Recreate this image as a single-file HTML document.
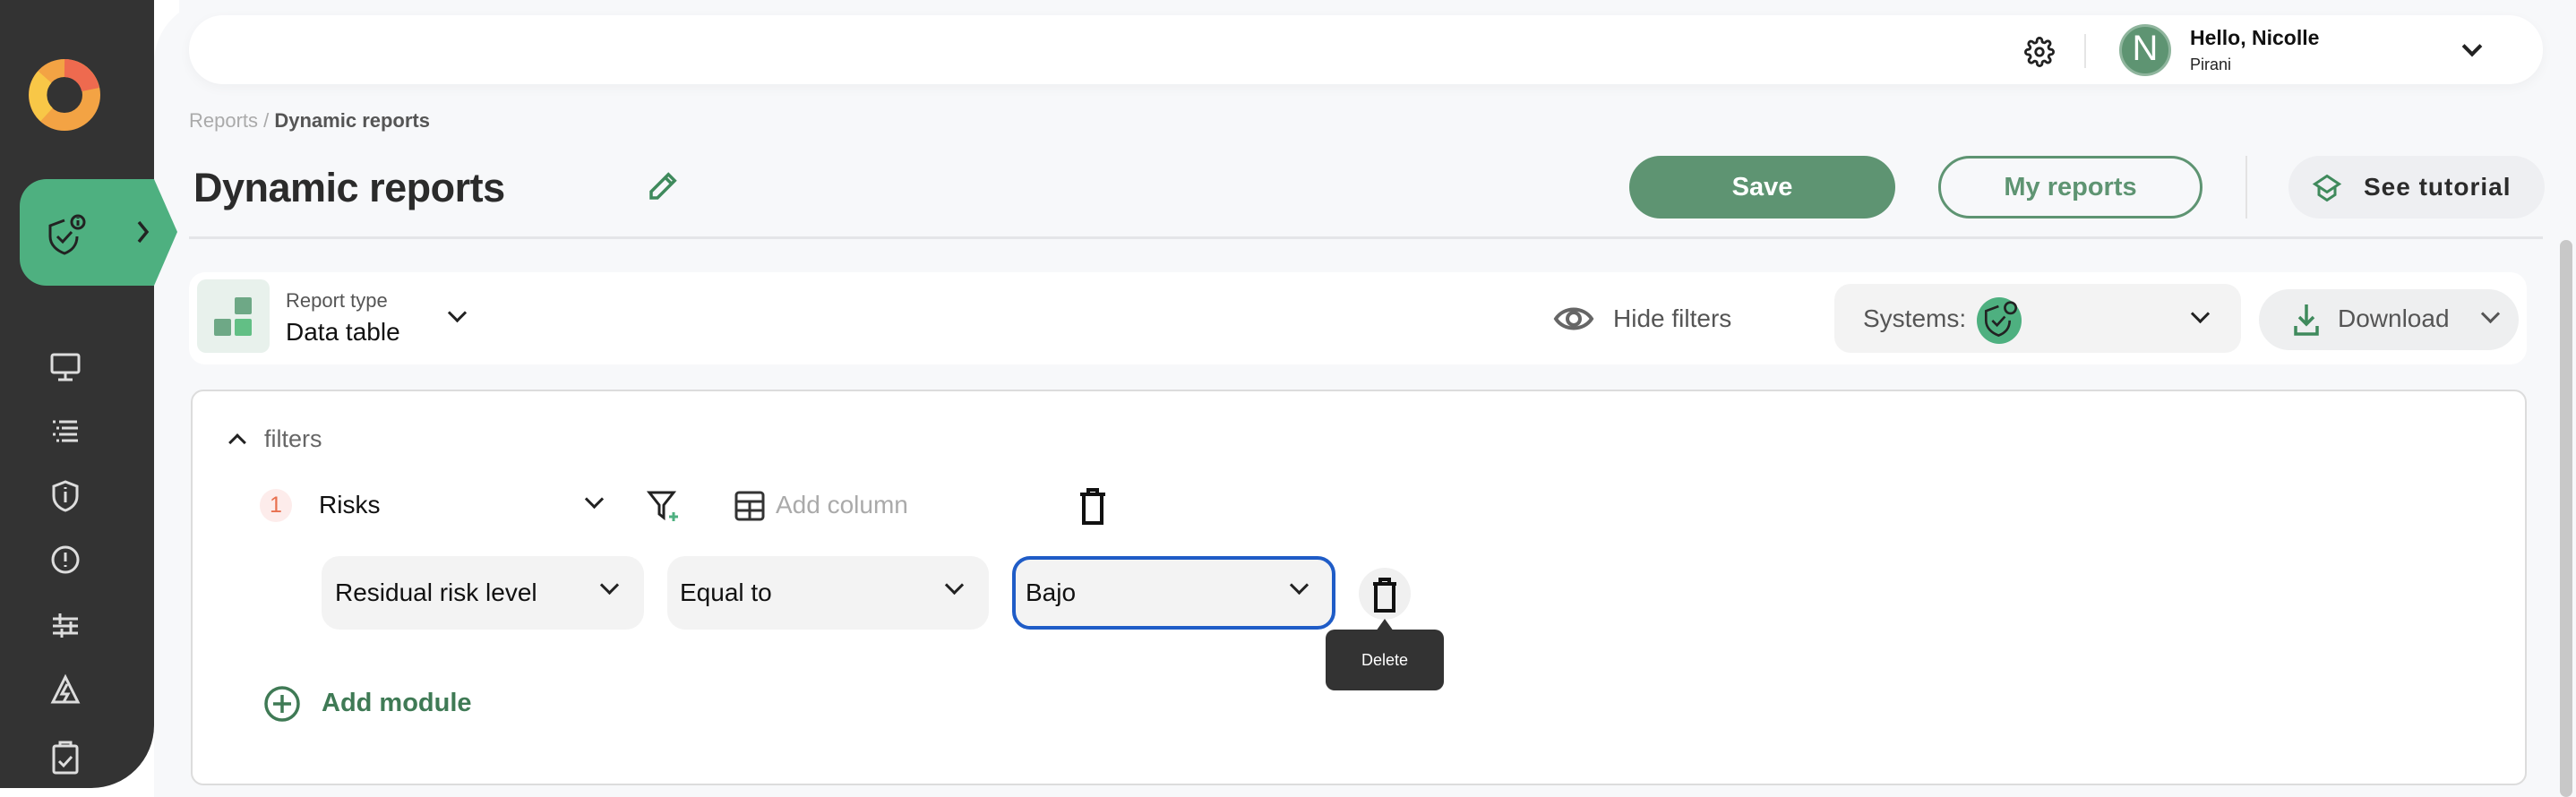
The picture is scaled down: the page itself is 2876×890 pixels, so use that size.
<!DOCTYPE html>
<html><head><meta charset="utf-8"><style>
*{box-sizing:border-box;margin:0;padding:0}
body{width:2876px;height:890px;overflow:hidden;background:#f7f8fa;font-family:"Liberation Sans",sans-serif;position:relative;color:#222}
.a{position:absolute}
.side{left:0;top:0;width:172px;height:880px;background:#333;border-bottom-right-radius:70px}
.mainbg{left:172px;top:0;width:2704px;height:890px;background:#f7f8fa;border-top-left-radius:70px}
.card{background:#fff}
.t{white-space:nowrap}
.chev{width:18px;height:18px;border-right:4px solid #222;border-bottom:4px solid #222;transform:rotate(45deg)}
</style></head><body>
<div class="a" style="left:0;top:0;width:200px;height:890px;background:#fff"></div>
<div class="a side"></div>
<div class="a mainbg"></div>
<!-- logo -->
<svg class="a" style="left:30px;top:64px" width="84" height="84" viewBox="0 0 84 84"><circle cx="42" cy="42" r="30" fill="none" stroke="#f3a344" stroke-width="20"/><path d="M42 12 A30 30 0 0 1 71 36" fill="none" stroke="#ee6a4f" stroke-width="20"/><path d="M22 64 A30 30 0 0 1 20 22" fill="none" stroke="#f8c747" stroke-width="20"/><circle cx="42" cy="42" r="19" fill="#333"/></svg>
<!-- active item -->
<div class="a" style="left:22px;top:200px;width:150px;height:119px;background:#4eb080;border-radius:30px 0 0 30px"></div>
<svg class="a" style="left:170px;top:200px" width="30" height="119"><path d="M0 0 L2 0 L28 59 L2 119 L0 119Z" fill="#4eb080"/></svg>
<svg class="a" style="left:50px;top:238px" width="50" height="50" viewBox="0 0 50 50" fill="none" stroke="#222" stroke-width="3"><path d="M22 8 L6 14 V26 C6 36 14 42 22 45 C30 42 36 36 36 26"/><path d="M14 26 L20 32 L30 21"/><circle cx="37" cy="10" r="7"/><path d="M37 8v6M37 5v1"/></svg>
<svg class="a" style="left:150px;top:245px" width="20" height="28"><path d="M5 3 L14 14 L5 25" fill="none" stroke="#222" stroke-width="3.5"/></svg>
<!-- sidebar icons -->
<svg class="a" style="left:55px;top:392px" width="36" height="480" fill="none" stroke="#ddd" stroke-width="3">
<rect x="3" y="4" width="30" height="20" rx="2"/><path d="M18 24v7M10 32h16"/>
<path d="M4 79h3M11 79h20M8 86h3M14 86h18M4 93h3M11 93h20M8 100h3M14 100h18"/>
<path d="M18 146 L5 151 V162 C5 171 12 176 18 178 C24 176 31 171 31 162 V151Z"/><path d="M18 157v12M18 152v2"/>
<circle cx="18" cy="233" r="14"/><path d="M18 225v10M18 239v2"/>
<path d="M4 299h28M4 307h28M4 315h28"/><path d="M12 293v12M24 302v12M14 310v10"/>
<path d="M18 364 L4 392 H32Z"/><path d="M20 372 L14 383 H21 L16 392"/>
<rect x="5" y="441" width="26" height="30" rx="2"/><path d="M12 441v-4h12v4M11 458l5 5 9-10"/>
</svg>
<!-- header card -->
<div class="a card" style="left:211px;top:17px;width:2628px;height:77px;border-radius:38px;box-shadow:0 4px 14px rgba(0,0,0,.04)"></div>
<svg class="a" style="left:2260px;top:41px" width="34" height="34" viewBox="0 0 24 24" fill="none" stroke="#222" stroke-width="2"><circle cx="12" cy="12" r="3"/><path d="M19.4 15a1.6 1.6 0 0 0 .3 1.8l.1.1a2 2 0 1 1-2.8 2.8l-.1-.1a1.6 1.6 0 0 0-1.8-.3 1.6 1.6 0 0 0-1 1.5V21a2 2 0 1 1-4 0v-.1a1.6 1.6 0 0 0-1-1.5 1.6 1.6 0 0 0-1.8.3l-.1.1a2 2 0 1 1-2.8-2.8l.1-.1a1.6 1.6 0 0 0 .3-1.8 1.6 1.6 0 0 0-1.5-1H3a2 2 0 1 1 0-4h.1a1.6 1.6 0 0 0 1.5-1 1.6 1.6 0 0 0-.3-1.8l-.1-.1a2 2 0 1 1 2.8-2.8l.1.1a1.6 1.6 0 0 0 1.8.3H9a1.6 1.6 0 0 0 1-1.5V3a2 2 0 1 1 4 0v.1a1.6 1.6 0 0 0 1 1.5 1.6 1.6 0 0 0 1.8-.3l.1-.1a2 2 0 1 1 2.8 2.8l-.1.1a1.6 1.6 0 0 0-.3 1.8V9a1.6 1.6 0 0 0 1.5 1H21a2 2 0 1 1 0 4h-.1a1.6 1.6 0 0 0-1.5 1z"/></svg>
<div class="a" style="left:2327px;top:38px;width:2px;height:38px;background:#e5e5e5"></div>
<div class="a" style="left:2366px;top:27px;width:58px;height:58px;border-radius:50%;background:#5e9472;border:3px solid #8fb59d"></div>
<div class="a t" style="left:2366px;top:32px;width:58px;text-align:center;font-size:40px;color:#fff">N</div>
<div class="a t" style="left:2445px;top:29px;font-size:23px;font-weight:bold;color:#111">Hello, Nicolle</div>
<div class="a t" style="left:2445px;top:62px;font-size:18px;color:#222">Pirani</div>
<div class="a chev" style="left:2752px;top:44px;width:16px;height:16px"></div>
<!-- breadcrumb/title -->
<div class="a t" style="left:211px;top:122px;font-size:22px;color:#aaa">Reports / <span style="color:#555;font-weight:bold">Dynamic reports</span></div>
<div class="a t" style="left:216px;top:184px;font-size:45px;font-weight:bold;color:#2b2b2b;letter-spacing:-0.5px">Dynamic reports</div>
<svg class="a" style="left:720px;top:186px" width="42" height="42" viewBox="0 0 24 24" fill="none" stroke="#3f8a5c" stroke-width="2"><path d="M4 20 L4 16 L15 5 L19 9 L8 20Z M13 7 L17 11"/></svg>
<div class="a t" style="left:1819px;top:174px;width:297px;height:70px;border-radius:35px;background:#5e9472;color:#fff;font-size:29px;font-weight:bold;text-align:center;line-height:70px">Save</div>
<div class="a t" style="left:2164px;top:174px;width:295px;height:70px;border-radius:35px;border:3px solid #5e9472;color:#5e9472;font-size:29px;font-weight:bold;text-align:center;line-height:64px">My reports</div>
<div class="a" style="left:2507px;top:174px;width:2px;height:70px;background:#e3e3e3"></div>
<div class="a t" style="left:2555px;top:174px;width:286px;height:70px;border-radius:35px;background:#eeeff2;color:#2b2b2b;font-size:28px;font-weight:bold;line-height:70px;padding-left:84px;letter-spacing:1px">See tutorial</div>
<svg class="a" style="left:2580px;top:192px" width="36" height="36" viewBox="0 0 24 24" fill="none" stroke="#3f8a5c" stroke-width="2"><path d="M12 3 L21 9 L12 15 L3 9Z M6 11v6l6 4 6-4v-6"/></svg>
<div class="a" style="left:211px;top:264px;width:2628px;height:3px;background:#e4e5e8"></div>
<div class="a" style="left:2858px;top:268px;width:14px;height:622px;background:#c8c8c8;border-radius:7px"></div>
<!-- report type card -->
<div class="a card" style="left:211px;top:304px;width:2610px;height:103px;border-radius:18px"></div>
<div class="a" style="left:220px;top:312px;width:81px;height:82px;border-radius:10px;background:#e8f1ec"></div>
<div class="a" style="left:262px;top:332px;width:19px;height:19px;background:#6ea886;border-radius:2px"></div>
<div class="a" style="left:239px;top:356px;width:19px;height:19px;background:#6ea886;border-radius:2px"></div>
<div class="a" style="left:262px;top:356px;width:19px;height:19px;background:#62bf85;border-radius:2px"></div>
<div class="a t" style="left:319px;top:323px;font-size:22px;color:#555">Report type</div>
<div class="a t" style="left:319px;top:355px;font-size:28px;color:#111">Data table</div>
<div class="a chev" style="left:503px;top:342px;width:15px;height:15px;border-width:3.5px"></div>
<svg class="a" style="left:1734px;top:339px" width="46" height="34" viewBox="0 0 46 34" fill="none" stroke="#666" stroke-width="4"><path d="M3 17 C12 3 34 3 43 17 C34 31 12 31 3 17Z"/><circle cx="23" cy="17" r="7"/></svg>
<div class="a t" style="left:1801px;top:340px;font-size:28px;color:#555">Hide filters</div>
<div class="a" style="left:2048px;top:317px;width:454px;height:77px;border-radius:18px;background:#f3f3f3"></div>
<div class="a t" style="left:2080px;top:340px;font-size:28px;color:#555">Systems:</div>
<div class="a" style="left:2207px;top:332px;width:50px;height:52px;border-radius:50%;background:#4eb080"></div>
<svg class="a" style="left:2212px;top:334px" width="44" height="46" viewBox="0 0 50 50" fill="none" stroke="#222" stroke-width="3"><path d="M22 8 L6 14 V26 C6 36 14 42 22 45 C30 42 36 36 36 26"/><path d="M14 26 L20 32 L30 21"/><circle cx="37" cy="10" r="7"/></svg>
<div class="a chev" style="left:2449px;top:343px;width:15px;height:15px;border-width:3.5px"></div>
<div class="a" style="left:2522px;top:323px;width:290px;height:68px;border-radius:34px;background:#eeeff0"></div>
<svg class="a" style="left:2560px;top:338px" width="30" height="38" fill="none" stroke="#3f8a5c" stroke-width="3.5"><path d="M15 2v22M7 16l8 8 8-8M3 26v9h24v-9"/></svg>
<div class="a t" style="left:2610px;top:340px;font-size:28px;color:#555">Download</div>
<div class="a chev" style="left:2773px;top:343px;width:15px;height:15px;border-width:3.5px;border-color:#555"></div>
<!-- filters card -->
<div class="a card" style="left:213px;top:435px;width:2608px;height:442px;border-radius:14px;border:2px solid #dcdcdc"></div>
<div class="a" style="left:258px;top:487px;width:14px;height:14px;border-left:3.5px solid #222;border-top:3.5px solid #222;transform:rotate(45deg)"></div>
<div class="a t" style="left:295px;top:475px;font-size:27px;color:#666">filters</div>
<div class="a t" style="left:290px;top:546px;width:36px;height:37px;border-radius:50%;background:#fdeceb;color:#e8704f;font-size:25px;text-align:center;line-height:37px">1</div>
<div class="a t" style="left:356px;top:548px;font-size:28px;color:#111">Risks</div>
<div class="a chev" style="left:656px;top:550px;width:15px;height:15px;border-width:3.5px"></div>
<svg class="a" style="left:722px;top:546px" width="40" height="40" fill="none" stroke="#222" stroke-width="3"><path d="M3 4 H30 L19 18 V32 L14 28 V18Z"/><path d="M30 26v10M25 31h10" stroke="#4eb080"/></svg>
<svg class="a" style="left:820px;top:548px" width="34" height="34" fill="none" stroke="#333" stroke-width="3"><rect x="2" y="2" width="30" height="30" rx="3"/><path d="M2 12h30M2 22h30M17 12v20"/></svg>
<div class="a t" style="left:866px;top:548px;font-size:28px;color:#aaa">Add column</div>
<svg class="a" style="left:1204px;top:544px" width="32" height="42" fill="none" stroke="#111" stroke-width="4"><path d="M2 8h28M11 8V3h10v5M6 8v32h20V8"/></svg>
<div class="a" style="left:359px;top:621px;width:360px;height:82px;border-radius:20px;background:#f3f3f3"></div>
<div class="a t" style="left:374px;top:646px;font-size:28px;color:#111">Residual risk level</div>
<div class="a chev" style="left:673px;top:646px;width:15px;height:15px;border-width:3.5px"></div>
<div class="a" style="left:745px;top:621px;width:359px;height:82px;border-radius:20px;background:#f3f3f3"></div>
<div class="a t" style="left:759px;top:646px;font-size:28px;color:#111">Equal to</div>
<div class="a chev" style="left:1058px;top:646px;width:15px;height:15px;border-width:3.5px"></div>
<div class="a" style="left:1130px;top:621px;width:361px;height:82px;border-radius:20px;background:#f3f3f3;border:4px solid #1f5cc7"></div>
<div class="a t" style="left:1145px;top:646px;font-size:28px;color:#111">Bajo</div>
<div class="a chev" style="left:1443px;top:646px;width:15px;height:15px;border-width:3.5px"></div>
<div class="a" style="left:1517px;top:634px;width:58px;height:58px;border-radius:50%;background:#f0f0f0"></div>
<svg class="a" style="left:1531px;top:644px" width="30" height="40" fill="none" stroke="#111" stroke-width="4"><path d="M2 8h26M10 8V3h10v5M5 8v30h20V8"/></svg>
<svg class="a" style="left:1536px;top:691px" width="20" height="14"><path d="M10 0 L20 14 H0Z" fill="#333"/></svg>
<div class="a t" style="left:1480px;top:703px;width:132px;height:68px;border-radius:10px;background:#333;color:#fff;font-size:18px;text-align:center;line-height:68px">Delete</div>
<svg class="a" style="left:293px;top:764px" width="44" height="44" fill="none" stroke="#3f7a55" stroke-width="3.5"><circle cx="22" cy="22" r="18"/><path d="M22 12v20M12 22h20"/></svg>
<div class="a t" style="left:359px;top:769px;font-size:29px;font-weight:bold;color:#3f7a55">Add module</div>
</body></html>
